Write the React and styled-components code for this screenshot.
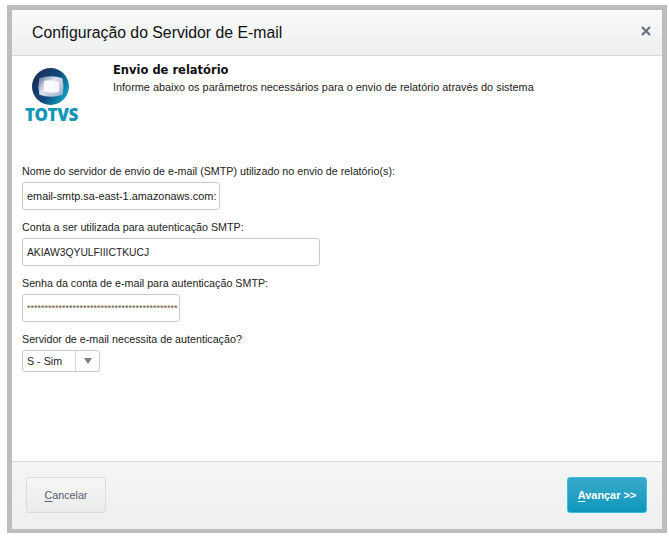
import React from "react";
import styled, { createGlobalStyle } from "styled-components";

const GlobalStyle = createGlobalStyle`
  html, body {
    margin: 0;
    padding: 0;
    background: #fff;
  }
  body {
    font-family: "Liberation Sans", Arial, sans-serif;
    color: #222;
  }
`;

const Page = styled.div`
  width: 669px;
  height: 540px;
  padding: 5px 2px 7px 7px;
  box-sizing: border-box;
`;

const Dialog = styled.div`
  width: 660px;
  height: 528px;
  box-sizing: border-box;
  border: 5px solid #bdbdbd;
  border-bottom-width: 4px;
  background: #fff;
  display: flex;
  flex-direction: column;
`;

const Header = styled.header`
  height: 45px;
  flex: none;
  display: flex;
  align-items: center;
  justify-content: space-between;
  padding: 0 11px 0 20px;
  background: linear-gradient(#f8f9f9, #eeeff1);
  border-bottom: 1px solid #d9d9d9;
`;

const Title = styled.h1`
  margin: 0;
  font-size: 15.8px;
  font-weight: 400;
  color: #111;
`;

const CloseIcon = styled.svg`
  width: 10px;
  height: 10px;
  display: block;
  margin-bottom: 3px;
`;

const Body = styled.main`
  flex: 1;
  padding: 7px 10px 0;
`;

const Intro = styled.section`
  display: flex;
  height: 101px;
`;

const Logo = styled.div`
  width: 91px;
  flex: none;
  display: flex;
  flex-direction: column;
  align-items: flex-start;
  padding: 5px 0 0 3px;
  box-sizing: border-box;
`;

const LogoMark = styled.svg`
  width: 37px;
  height: 37px;
  display: block;
  margin-left: 7px;
`;

const LogoWord = styled.span`
  font-family: "Open Sans", sans-serif;
  font-size: 17px;
  font-weight: 800;
  line-height: 17px;
  color: #1496b9;
  margin-top: 1px;
  letter-spacing: -0.5px;
`;

const IntroTitle = styled.h2`
  margin: 0 0 3px;
  font-family: "DejaVu Sans", Verdana, sans-serif;
  font-size: 11.5px;
  font-weight: 700;
  line-height: 14px;
  color: #111;
`;

const IntroLine = styled.p`
  margin: 0;
  font-size: 10.9px;
  line-height: 14px;
  color: #222;
`;

const Form = styled.form`
  display: flex;
  flex-direction: column;
  align-items: flex-start;
`;

const Field = styled.div`
  height: 56px;
  display: flex;
  flex-direction: column;
  align-items: flex-start;
`;

const Label = styled.label`
  font-size: 10.73px;
  line-height: 14px;
  height: 14px;
  margin-bottom: 4px;
  color: #222;
`;

const TextInput = styled.input`
  width: ${(p) => p.$width}px;
  height: 28px;
  box-sizing: border-box;
  padding: 0 1px 0 4px;
  border: 1px solid #c9c9c9;
  border-radius: 3px;
  background: #fff;
  font-family: "Liberation Sans", Arial, sans-serif;
  font-size: ${(p) => p.$size}px;
  color: ${(p) => p.$color || "#222"};
  outline: none;
`;

const Select = styled.div`
  width: 78px;
  height: 22px;
  box-sizing: border-box;
  display: flex;
  align-items: stretch;
  border: 1px solid #c9c9c9;
  border-radius: 3px;
  background: #fff;
`;

const SelectValue = styled.span`
  flex: 1;
  padding-left: 4px;
  font-size: 10.7px;
  line-height: 20px;
  color: #222;
`;

const SelectArrow = styled.span`
  width: 23px;
  flex: none;
  border-left: 1px solid #d4d4d4;
  display: flex;
  align-items: center;
  justify-content: center;

  &::after {
    content: "";
    border-left: 4px solid transparent;
    border-right: 4px solid transparent;
    border-top: 6px solid #7b8088;
  }
`;

const Footer = styled.footer`
  height: 68px;
  flex: none;
  box-sizing: border-box;
  display: flex;
  align-items: flex-start;
  justify-content: space-between;
  padding: 15px 15px 0 14px;
  background: linear-gradient(#f5f5f5, #eeeff1);
  border-top: 1px solid #d9d9d9;
`;

const Button = styled.button`
  width: 80px;
  height: 36px;
  padding: 0;
  border-radius: 3px;
  font-family: "Liberation Sans", Arial, sans-serif;
  font-size: ${(p) => (p.$primary ? 10.9 : 10.7)}px;
  cursor: pointer;
  border: 1px solid ${(p) => (p.$primary ? "#38bfe4" : "#dcdcdc")};
  background: ${(p) =>
    p.$primary ? "linear-gradient(#39a9c9, #0f97bd)" : "linear-gradient(#f6f6f6, #eaebec)"};
  color: ${(p) => (p.$primary ? "#fff" : "#55606e")};
  font-weight: ${(p) => (p.$primary ? 700 : 400)};

  u {
    text-underline-offset: 2px;
  }
`;

const App = () => {
  return (
    <Page>
      <GlobalStyle />
      <Dialog>
        <Header>
          <Title>Configuração do Servidor de E-mail</Title>
          <CloseIcon viewBox="0 0 10 10">
            <path d="M1 1 L9 9 M9 1 L1 9" stroke="#6a7280" strokeWidth="2.2" fill="none" />
          </CloseIcon>
        </Header>
        <Body>
          <Intro>
            <Logo>
              <LogoMark viewBox="0 0 40 40">
                <defs>
                  <linearGradient id="ring" x1="0.1" y1="0.2" x2="1" y2="0.75">
                    <stop offset="0" stopColor="#1b2f5c" />
                    <stop offset="0.5" stopColor="#124a7c" />
                    <stop offset="1" stopColor="#0fa9c8" />
                  </linearGradient>
                  <linearGradient id="pane" x1="0" y1="0" x2="1" y2="0.8">
                    <stop offset="0" stopColor="#5d6f9c" />
                    <stop offset="0.45" stopColor="#dfe4ee" />
                    <stop offset="1" stopColor="#9fb4c9" />
                  </linearGradient>
                </defs>
                <circle cx="20" cy="20" r="20" fill="url(#ring)" />
                <path d="M8 11 Q20 7 33 11 Q35 20 33 29 Q20 33 8 29 Q6 20 8 11 Z" fill="url(#pane)" />
                <path d="M13 14 Q21 12 29 15 Q30 20 29 26 Q21 28 13 25 Q12 20 13 14 Z" fill="#f9fafc" />
              </LogoMark>
              <LogoWord>TOTVS</LogoWord>
            </Logo>
            <div>
              <IntroTitle>Envio de relatório</IntroTitle>
              <IntroLine>Informe abaixo os parâmetros necessários para o envio de relatório através do sistema</IntroLine>
            </div>
          </Intro>
          <Form>
            <Field>
              <Label>Nome do servidor de envio de e-mail (SMTP) utilizado no envio de relatório(s):</Label>
              <TextInput $width={198} $size={10.9} readOnly value="email-smtp.sa-east-1.amazonaws.com:" />
            </Field>
            <Field>
              <Label>Conta a ser utilizada para autenticação SMTP:</Label>
              <TextInput $width={298} $size={10.3} readOnly value="AKIAW3QYULFIIICTKUCJ" />
            </Field>
            <Field>
              <Label>Senha da conta de e-mail para autenticação SMTP:</Label>
              <TextInput $width={158} $size={9} $color="#5f4f33" readOnly value={"*".repeat(43)} />
            </Field>
            <Field>
              <Label>Servidor de e-mail necessita de autenticação?</Label>
              <Select>
                <SelectValue>S - Sim</SelectValue>
                <SelectArrow />
              </Select>
            </Field>
          </Form>
        </Body>
        <Footer>
          <Button type="button">
            <u>C</u>ancelar
          </Button>
          <Button type="button" $primary>
            <u>A</u>vançar &gt;&gt;
          </Button>
        </Footer>
      </Dialog>
    </Page>
  );
};

export default App;
